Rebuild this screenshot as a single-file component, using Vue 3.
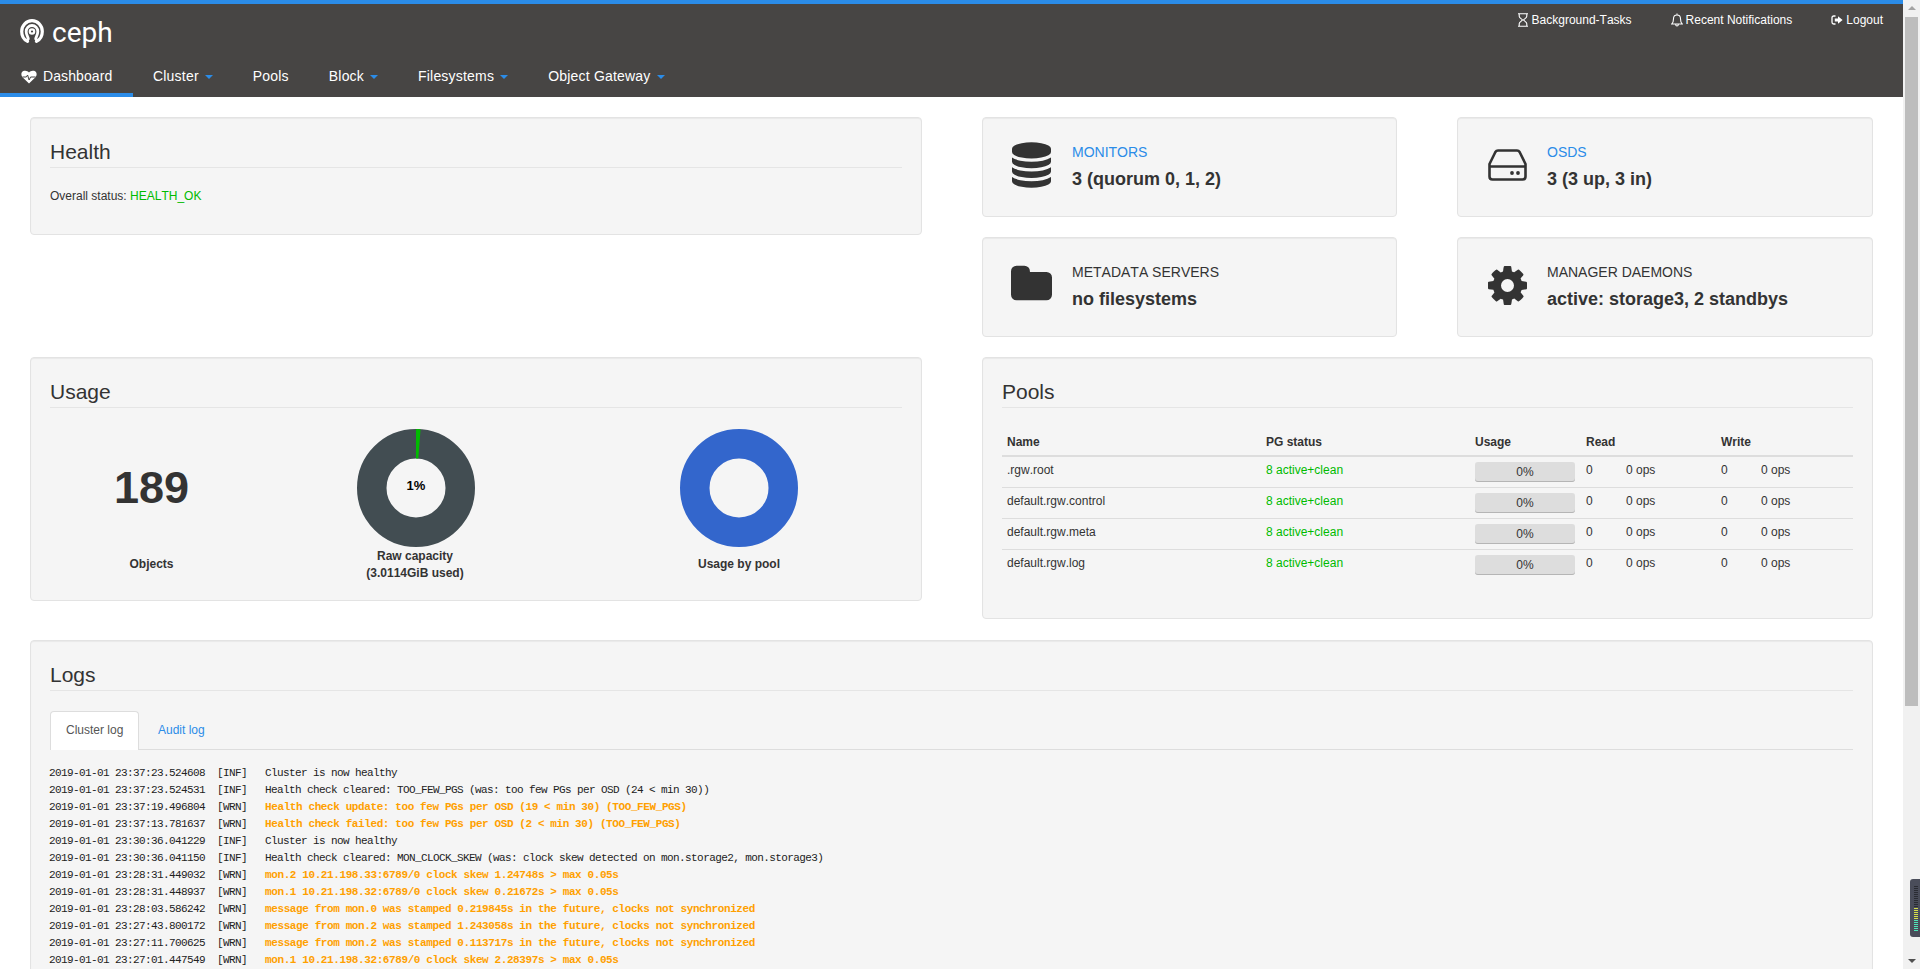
<script setup>
const navItems = [
  { label: 'Cluster', caret: true },
  { label: 'Pools', caret: false },
  { label: 'Block', caret: true },
  { label: 'Filesystems', caret: true },
  { label: 'Object Gateway', caret: true }
]
const pools = ['.rgw.root', 'default.rgw.control', 'default.rgw.meta', 'default.rgw.log']
const d = '2019-01-01 '
const logs = [
  [d + '23:37:23.524608', 'INF', 'Cluster is now healthy'],
  [d + '23:37:23.524531', 'INF', 'Health check cleared: TOO_FEW_PGS (was: too few PGs per OSD (24 < min 30))'],
  [d + '23:37:19.496804', 'WRN', 'Health check update: too few PGs per OSD (19 < min 30) (TOO_FEW_PGS)'],
  [d + '23:37:13.781637', 'WRN', 'Health check failed: too few PGs per OSD (2 < min 30) (TOO_FEW_PGS)'],
  [d + '23:30:36.041229', 'INF', 'Cluster is now healthy'],
  [d + '23:30:36.041150', 'INF', 'Health check cleared: MON_CLOCK_SKEW (was: clock skew detected on mon.storage2, mon.storage3)'],
  [d + '23:28:31.449032', 'WRN', 'mon.2 10.21.198.33:6789/0 clock skew 1.24748s > max 0.05s'],
  [d + '23:28:31.448937', 'WRN', 'mon.1 10.21.198.32:6789/0 clock skew 0.21672s > max 0.05s'],
  [d + '23:28:03.586242', 'WRN', 'message from mon.0 was stamped 0.219845s in the future, clocks not synchronized'],
  [d + '23:27:43.800172', 'WRN', 'message from mon.2 was stamped 1.243058s in the future, clocks not synchronized'],
  [d + '23:27:11.700625', 'WRN', 'message from mon.2 was stamped 0.113717s in the future, clocks not synchronized'],
  [d + '23:27:01.447549', 'WRN', 'mon.1 10.21.198.32:6789/0 clock skew 2.28397s > max 0.05s']
]
</script>

<template>
  <div class="root">
    <div class="page">
      <header class="navbar">
        <div class="nav-top">
          <div class="brand">
            <svg class="logo" viewBox="0 0 24 24" fill="none" stroke="#fff" stroke-linecap="round">
              <path d="M7.500 22.300C3.700 20.500 1.700 16.800 1.700 12.500C1.700 6.400 6.300 1.700 12 1.700S22.300 6.400 22.300 12.500C22.300 16.800 20.300 20.500 16.500 22.300" stroke-width="3.200" />
              <path d="M8.300 20C8 17.500 6.200 16 6.200 12.500C6.200 9.200 8.800 6.500 12 6.500S17.800 9.200 17.800 12.500C17.800 16 16 17.500 15.700 20" stroke-width="2.800" />
              <circle cx="12" cy="12.500" r="2.200" stroke-width="2.200" />
            </svg>
            <span class="brand-text">ceph</span>
          </div>
          <div class="utils">
            <span class="util">
              <svg class="uicon" viewBox="0 0 12 14" fill="none" stroke="#fff" stroke-width="1.100"><path d="M1 .7h10M1 13.300h10M2.200 .7v2.500C2.200 5 5 6 5.500 7C5 8 2.200 9 2.200 10.800v2.500M9.800 .7v2.500C9.800 5 7 6 6.500 7C7 8 9.800 9 9.800 10.800v2.500" /></svg>
              Background-Tasks
            </span>
            <span class="util">
              <svg class="uicon" viewBox="0 0 12 14" fill="none" stroke="#fff" stroke-width="1.100"><path d="M.8 11c1.500-1.500 1.700-3 1.700-5.200C2.500 3.500 4 2 6 2s3.500 1.500 3.500 3.800c0 2.200.2 3.700 1.700 5.200zM4.700 11.500c0 2 2.600 2 2.600 0M6 .6V2" /></svg>
              Recent Notifications
            </span>
            <span class="util">
              <svg class="uicon" viewBox="0 0 12 14" fill="#fff"><path d="M4.500 3H2.700C1.700 3 1 3.700 1 4.700v4.600C1 10.300 1.700 11 2.700 11h1.800" fill="none" stroke="#fff" stroke-width="1.300" /><path d="M7 3.200 11.600 7 7 10.800V8.600H3.800V5.400H7z" /></svg>
              Logout
            </span>
          </div>
        </div>
        <nav class="tabs">
          <a class="tab active">
            <svg class="heart" viewBox="0 0 16 14">
              <path d="M8 13.500 1.500 7.200C-.5 5 .2 1.500 3 .8 5 .3 6.800 1 8 2.500 9.200 1 11 .3 13 .8c2.800.7 3.500 4.200 1.500 6.400z" fill="#fff" />
              <path d="M1.500 7h3.800l1.300-2 1.500 5 1.500-3h5" fill="none" stroke="#474544" stroke-width="1" />
            </svg>
            Dashboard
          </a>
          <a v-for="item in navItems" :key="item.label" class="tab">
            {{ item.label }}<i v-if="item.caret" class="caret"></i>
          </a>
        </nav>
      </header>

      <main class="content">
        <div class="top-grid">
          <section class="well health">
            <h2 class="legend">Health</h2>
            <p class="status">Overall status: <span class="ok">HEALTH_OK</span></p>
          </section>

          <div class="stats">
            <section class="well stat">
              <div class="stat-icon">
                <svg class="i-db" viewBox="0 0 1536 1792" fill="#333"><path d="M768 768q237 0 443-43t325-127v170q0 69-103 128t-280 93.500-385 34.500-385-34.500-280-93.500-103-128v-170q119 84 325 127t443 43zm0 768q237 0 443-43t325-127v170q0 69-103 128t-280 93.500-385 34.500-385-34.500-280-93.500-103-128v-170q119 84 325 127t443 43zm0-384q237 0 443-43t325-127v170q0 69-103 128t-280 93.500-385 34.500-385-34.500-280-93.500-103-128v-170q119 84 325 127t443 43zm0-1152q208 0 385 34.500t280 93.500 103 128v128q0 69-103 128t-280 93.500-385 34.500-385-34.500-280-93.500-103-128v-128q0-69 103-128t280-93.500 385-34.500z" /></svg>
              </div>
              <div>
                <div class="stat-label link">MONITORS</div>
                <div class="stat-value">3 (quorum 0, 1, 2)</div>
              </div>
            </section>
            <section class="well stat">
              <div class="stat-icon">
                <svg class="i-hdd" viewBox="0 0 39 32" fill="none" stroke="#333" stroke-width="2.600" stroke-linejoin="round">
                  <path d="M10 1.500h19c1.200 0 2 .5 2.600 1.500L37.500 15v12.500c0 1.700-1.300 3-3 3h-30c-1.700 0-3-1.300-3-3V15L7.400 3C8 2 8.800 1.500 10 1.500zM2 17.500h35" />
                  <circle cx="24" cy="24" r="1.900" fill="#333" stroke="none" />
                  <circle cx="30" cy="24" r="1.900" fill="#333" stroke="none" />
                </svg>
              </div>
              <div>
                <div class="stat-label link">OSDS</div>
                <div class="stat-value">3 (3 up, 3 in)</div>
              </div>
            </section>
            <section class="well stat">
              <div class="stat-icon">
                <svg class="i-folder" viewBox="64 128 1664 1408" fill="#333"><path d="M1728 608v704q0 92-66 158t-158 66h-1216q-92 0-158-66t-66-158v-960q0-92 66-158t158-66h320q92 0 158 66t66 158v32h672q92 0 158 66t66 158z" /></svg>
              </div>
              <div>
                <div class="stat-label">METADATA SERVERS</div>
                <div class="stat-value">no filesystems</div>
              </div>
            </section>
            <section class="well stat">
              <div class="stat-icon">
                <svg class="i-gear" viewBox="128 128 1536 1536" fill="#333"><path d="M1152 896q0-106-75-181t-181-75-181 75-75 181 75 181 181 75 181-75 75-181zm512-109v222q0 12-8 23t-20 13l-185 28q-19 54-39 91 35 50 107 138 10 12 10 25t-9 23q-27 37-99 108t-94 71q-12 0-26-9l-138-108q-44 23-91 38-16 136-29 186-7 28-36 28h-222q-14 0-24.500-8.500t-11.500-21.500l-28-184q-49-16-90-37l-141 107q-10 9-25 9-14 0-25-11-126-114-165-168-7-10-7-23 0-12 8-23 15-21 51-66.500t54-70.500q-27-50-41-99l-183-27q-13-2-21-12.500t-8-23.500v-222q0-12 8-23t19-13l186-28q14-46 39-92-40-57-107-138-10-12-10-24 0-10 9-23 26-36 98.500-107.500t94.500-71.500q13 0 26 10l138 107q44-23 91-38 16-136 29-186 7-28 36-28h222q14 0 24.500 8.500t11.500 21.500l28 184q49 16 90 37l142-107q9-9 24-9 13 0 25 10 129 119 165 170 7 8 7 22 0 12-8 23-15 21-51 66.500t-54 70.500q26 50 41 98l183 28q13 2 21 12.500t8 23.500z" /></svg>
              </div>
              <div>
                <div class="stat-label">MANAGER DAEMONS</div>
                <div class="stat-value">active: storage3, 2 standbys</div>
              </div>
            </section>
          </div>
        </div>

        <div class="mid-grid">
          <section class="well usage">
            <h2 class="legend">Usage</h2>
            <div class="usage-row">
              <div class="usage-col">
                <div class="big-box"><span class="big">189</span></div>
                <div class="cap">Objects</div>
              </div>
              <div class="usage-col">
                <div class="donut">
                  <svg viewBox="0 0 118 118" width="118" height="118" fill="none">
                    <circle cx="59" cy="59" r="44.250" stroke="#424d52" stroke-width="29.500" />
                    <circle cx="59" cy="59" r="44.250" stroke="#00bb00" stroke-width="29.500" stroke-dasharray="3.500 274.500" transform="rotate(-90 59 59)" />
                  </svg>
                  <span class="pct">1%</span>
                </div>
                <div class="cap two">Raw capacity<br />(3.0114GiB used)</div>
              </div>
              <div class="usage-col">
                <div class="donut">
                  <svg viewBox="0 0 118 118" width="118" height="118" fill="none">
                    <circle cx="59" cy="59" r="44.250" stroke="#3366cc" stroke-width="29.500" />
                  </svg>
                </div>
                <div class="cap">Usage by pool</div>
              </div>
            </div>
          </section>

          <section class="well pools">
            <h2 class="legend">Pools</h2>
            <table class="table">
              <thead>
                <tr>
                  <th class="c1">Name</th>
                  <th class="c2">PG status</th>
                  <th class="c3">Usage</th>
                  <th class="c4">Read</th>
                  <th>Write</th>
                </tr>
              </thead>
              <tbody>
                <tr v-for="p in pools" :key="p">
                  <td>{{ p }}</td>
                  <td class="ok">8 active+clean</td>
                  <td><div class="progress">0%</div></td>
                  <td><span class="rate"><span class="num">0</span><span>0 ops</span></span></td>
                  <td><span class="rate"><span class="num">0</span><span>0 ops</span></span></td>
                </tr>
              </tbody>
            </table>
          </section>
        </div>

        <section class="well logs">
          <h2 class="legend">Logs</h2>
          <div class="log-tabs">
            <a class="log-tab on">Cluster log</a>
            <a class="log-tab link">Audit log</a>
          </div>
          <div class="log-list">
            <div v-for="l in logs" :key="l[0]" class="log-line">
              <span class="ts">{{ l[0] }}</span>
              <span class="lvl">[{{ l[1] }}]</span>
              <span :class="{ warn: l[1] === 'WRN' }">{{ l[2] }}</span>
            </div>
          </div>
        </section>
      </main>
    </div>

    <aside class="scrollbar">
      <i class="arrow up"></i>
      <div class="thumb"></div>
      <i class="arrow down"></i>
    </aside>

    <div class="meter"><div class="meter-bar"></div></div>
  </div>
</template>

<style scoped>
.root {
  position: relative;
  display: flex;
  width: 1920px;
  height: 969px;
  overflow: hidden;
  background: #fff;
  color: #333;
  font-family: "Liberation Sans", Arial, sans-serif;
  font-size: 12px;
  line-height: 17px;
  font-kerning: none;
}
.page { width: 1903px; flex: none; }

.navbar {
  height: 97px;
  box-sizing: border-box;
  border-top: 4px solid #2b8ce8;
  background: #474544;
  color: #fff;
}
.nav-top {
  display: flex;
  justify-content: space-between;
  height: 53px;
}
.brand {
  display: flex;
  align-items: flex-start;
  padding: 15px 0 0 20px;
}
.logo { width: 24px; height: 24px; }
.brand-text {
  margin: -2px 0 0 8px;
  font-family: Roboto, sans-serif;
  font-size: 28px;
  line-height: 32px;
}
.utils {
  display: flex;
  gap: 39px;
  padding: 7px 20px 0 0;
}
.util {
  display: flex;
  align-items: center;
  gap: 3px;
  height: 18px;
  font-size: 12px;
}
.uicon { width: 12px; height: 14px; }

.tabs { display: flex; height: 40px; }
.tab {
  display: flex;
  align-items: center;
  box-sizing: border-box;
  height: 40px;
  padding: 0 20px 1px;
  font-size: 14px;
  letter-spacing: .2px;
}
.tab.active {
  width: 133px;
  padding: 3px 20px 0 21px;
  border-bottom: 4px solid #2b8ce8;
  letter-spacing: .1px;
}
.heart { width: 16px; height: 14px; margin-right: 6px; }
.caret {
  width: 0;
  height: 0;
  margin-left: 6px;
  border-top: 4px solid #2b8ce8;
  border-left: 4px solid transparent;
  border-right: 4px solid transparent;
}

.content {
  padding: 20px 30px 0;
}
.well {
  box-sizing: border-box;
  padding: 19px;
  background: #f5f5f5;
  border: 1px solid #e3e3e3;
  border-radius: 4px;
  box-shadow: inset 0 1px 1px rgba(0, 0, 0, .05);
}
.legend {
  margin: 0 0 20px;
  height: 31px;
  box-sizing: border-box;
  border-bottom: 1px solid #e5e5e5;
  font-size: 21px;
  font-weight: 400;
  line-height: 30px;
  color: #333;
}
.top-grid, .mid-grid {
  display: grid;
  grid-template-columns: 892px 891px;
  column-gap: 60px;
  align-items: start;
}
.health { height: 118px; }
.status { margin: 0; }
.ok { color: #00bb00; }
.link { color: #2b8ce8; }

.stats {
  display: grid;
  grid-template-columns: 415px 416px;
  grid-auto-rows: 100px;
  gap: 20px 60px;
}
.stat {
  display: flex;
  align-items: center;
  padding: 0 0 0 28px;
}
.stat-icon {
  display: flex;
  flex: none;
  justify-content: center;
  align-items: center;
  width: 41px;
  margin: 0 20px 4px 0;
}
.stat:nth-child(even) .stat-icon { margin: 0 19px 4px 1px; }
.i-db { width: 39px; height: 46px; }
.i-hdd { width: 39px; height: 32px; }
.i-folder { width: 42px; height: 36px; margin-bottom: 4px; }
.i-gear { width: 39px; height: 39px; }
.stat-label { font-size: 14px; line-height: 20px; }
.stat-value {
  margin-top: 4px;
  font-size: 18px;
  font-weight: 700;
  line-height: 26px;
}

.mid-grid { margin-top: 20px; }
.usage { height: 244px; }
.usage-row {
  display: grid;
  grid-template-columns: 203px 326px 320px;
  margin-top: 21px;
}
.usage-col {
  display: flex;
  flex-direction: column;
  align-items: center;
}
.big-box {
  display: flex;
  align-items: center;
  justify-content: center;
  height: 118px;
}
.big { font-size: 45px; font-weight: 700; line-height: 50px; }
.donut { position: relative; width: 118px; height: 118px; }
.donut svg { display: block; }
.pct {
  position: absolute;
  left: 0;
  right: 0;
  top: 48px;
  text-align: center;
  font-size: 13px;
  font-weight: 700;
  color: #000;
}
.cap {
  margin-top: 9px;
  font-weight: 700;
  text-align: center;
}
.cap.two { margin-top: 1px; margin-left: -2px; }

.pools { height: 262px; }
.table {
  width: 851px;
  border-collapse: collapse;
  table-layout: fixed;
}
.table th {
  height: 28px;
  box-sizing: border-box;
  padding: 5px 4px 4px 5px;
  text-align: left;
  font-weight: 700;
  border-bottom: 2px solid #ddd;
}
.c1 { width: 259px; }
.c2 { width: 209px; }
.c3 { width: 111px; }
.c4 { width: 135px; }
.table td {
  padding: 5px 4px 5px 5px;
  vertical-align: top;
  border-top: 1px solid #ddd;
}
.table tbody tr:first-child td { border-top: 0; }
.progress {
  width: 100px;
  height: 20px;
  box-sizing: border-box;
  padding-top: 2px;
  background: #dddddd;
  border-radius: 3px;
  box-shadow: inset 0 -1px 0 #b5b5b5;
  text-align: center;
}
.rate { display: flex; }
.num { width: 40px; }

.logs {
  margin-top: 21px;
  height: 400px;
}
.log-tabs {
  display: flex;
  height: 39px;
  box-sizing: border-box;
  border-bottom: 1px solid #ddd;
}
.log-tab {
  height: 39px;
  box-sizing: border-box;
  padding: 10px 15px;
  border: 1px solid transparent;
  border-bottom: 0;
  border-radius: 4px 4px 0 0;
  margin-right: 2px;
}
.log-tab.on {
  width: 89px;
  background: #fff;
  border-color: #ddd;
  color: #555;
  white-space: nowrap;
}
.log-tab.link { margin-left: 1px; }
.log-list { margin: 15px 0 0 -1px; }
.log-line {
  display: flex;
  height: 17px;
  font-family: "Liberation Mono", monospace;
  font-size: 11px;
  letter-spacing: -.6px;
  line-height: 17px;
  white-space: pre;
  color: #222;
}
.ts { margin-right: 12px; }
.lvl { margin-right: 18px; }
.warn { color: #ffa000; font-weight: 700; letter-spacing: -.4px; }

.scrollbar {
  position: relative;
  flex: none;
  width: 17px;
  height: 969px;
  background: #f1f1f1;
}
.thumb {
  position: absolute;
  top: 17px;
  left: 2px;
  width: 13px;
  height: 689px;
  background: #bdbdbd;
}
.arrow {
  position: absolute;
  left: 5px;
  width: 0;
  height: 0;
  border-left: 4px solid transparent;
  border-right: 4px solid transparent;
}
.arrow.up { top: 6px; border-bottom: 4px solid #a3a3a3; }
.arrow.down { bottom: 6px; border-top: 4px solid #505050; }

.meter {
  position: absolute;
  top: 879px;
  right: 0;
  width: 10px;
  height: 58px;
  box-sizing: border-box;
  padding: 7px 0 0 4px;
  background: #4a4d5a;
  border-radius: 3px 0 0 3px;
}
.meter-bar {
  width: 4px;
  height: 46px;
  background:
    repeating-linear-gradient(to bottom, transparent 0 1px, #4a4d5a 1px 2px),
    linear-gradient(to bottom, #2a2c33 0 21px, #d6e04a 21px 33px, #4ee6b8 33px);
}
</style>

<style>
html, body { margin: 0; overflow: hidden; background: #fff; }
</style>
